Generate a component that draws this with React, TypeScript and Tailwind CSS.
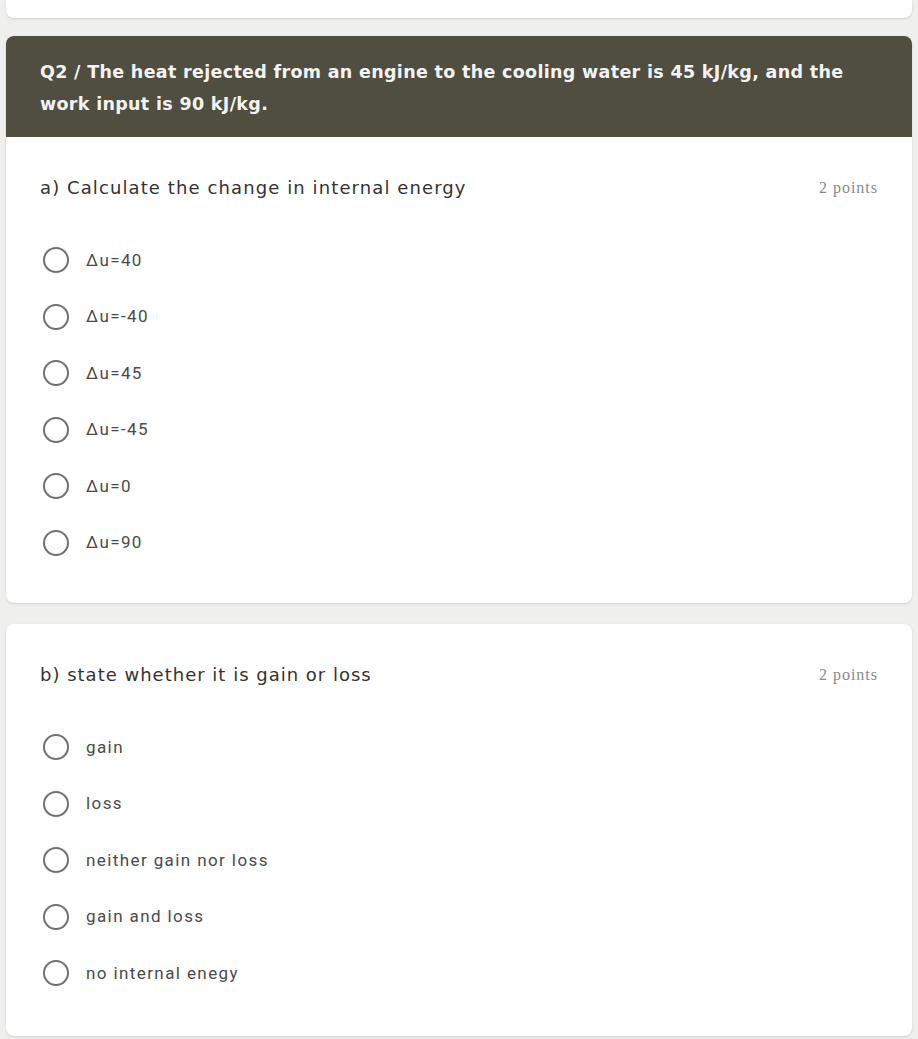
import React from 'react';

const Radio = ({ label }: { label: string }) => (
  <div className="flex items-center h-[56.5px]">
    <span className="w-[26px] h-[26px] rounded-full border-[2.5px] border-[#707070] shrink-0 ml-[37px]" />
    <span
      className="ml-[17px] text-[17px] tracking-[1.4px] text-[#4a4a4a]"
      style={{ fontFamily: 'Roboto, sans-serif' }}
    >
      {label}
    </span>
  </div>
);

const Points = () => (
  <span
    className="text-[16px] tracking-[1px] text-[#8a8a8a] mr-[34px]"
    style={{ fontFamily: '"Liberation Serif", serif' }}
  >
    2 points
  </span>
);

export default function App() {
  const partA = ['Δu=40', 'Δu=-40', 'Δu=45', 'Δu=-45', 'Δu=0', 'Δu=90'];
  const partB = ['gain', 'loss', 'neither gain nor loss', 'gain and loss', 'no internal enegy'];

  return (
    <div
      className="w-[918px] h-[1039px] bg-[#efefed] overflow-hidden"
      style={{ fontFamily: '"DejaVu Sans", sans-serif' }}
    >
      {/* cut-off card above */}
      <div className="mx-[6px] h-[18px] bg-white rounded-b-lg shadow-sm" />

      {/* Q2 card */}
      <div className="mx-[6px] mt-[18px] bg-white rounded-lg shadow-sm overflow-hidden">
        <div className="bg-[#4f4e41] px-[34px] pt-[20px] pb-[17px] text-[#f4f4f2] text-[17.5px] leading-[32px] font-bold tracking-[0.32px]">
          Q2 / The heat rejected from an engine to the cooling water is 45 kJ/kg, and the
          <br />
          work input is 90 kJ/kg.
        </div>
        <div className="flex items-center justify-between pt-[37px] pl-[34px]">
          <span className="text-[18px] tracking-[1.1px] text-[#333]">a) Calculate the change in internal energy</span>
          <Points />
        </div>
        <div className="pt-[31px] pb-[32px]">
          {partA.map((o) => (
            <Radio key={o} label={o} />
          ))}
        </div>
      </div>

      {/* part b card */}
      <div className="mx-[6px] mt-[21px] bg-white rounded-lg shadow-sm">
        <div className="flex items-center justify-between pt-[37px] pl-[34px]">
          <span className="text-[18px] tracking-[1px] text-[#333]">b) state whether it is gain or loss</span>
          <Points />
        </div>
        <div className="pt-[31px] pb-[34px]">
          {partB.map((o) => (
            <Radio key={o} label={o} />
          ))}
        </div>
      </div>
    </div>
  );
}
